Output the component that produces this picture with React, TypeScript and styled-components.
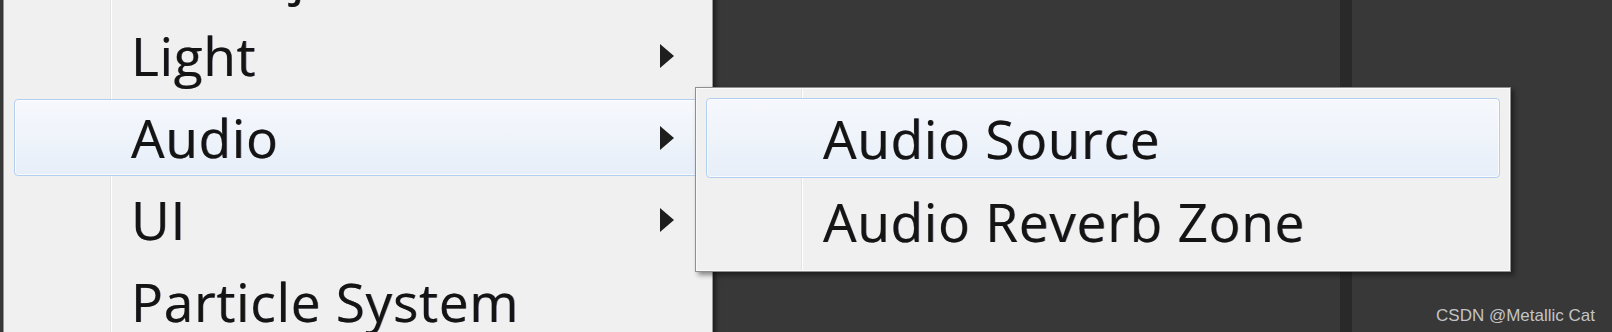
import React from "react";
import styled, { createGlobalStyle } from "styled-components";

const GlobalStyle = createGlobalStyle`
  html, body {
    margin: 0;
    padding: 0;
    width: 1612px;
    height: 332px;
    overflow: hidden;
  }
  body {
    background: linear-gradient(
      90deg,
      #383838 0 1340px,
      #292929 1340px 1352px,
      #383838 1352px
    );
    font-family: "Open Sans", "Noto Sans", sans-serif;
  }
`;

const Stage = styled.div`
  position: relative;
  display: flex;
  align-items: flex-start;
  height: 332px;
  padding-left: 3px;
  box-sizing: border-box;
  overflow: hidden;
`;

const Menu = styled.div<{ $gutter: number }>`
  position: relative;
  box-sizing: border-box;
  display: flex;
  flex-direction: column;
  flex: none;
  border: 1px solid #979797;
  background: linear-gradient(
    90deg,
    #f0f0f0 0 ${(p) => p.$gutter}px,
    #e2e3e3 ${(p) => p.$gutter}px ${(p) => p.$gutter + 1}px,
    #ffffff ${(p) => p.$gutter + 1}px ${(p) => p.$gutter + 2}px,
    #f0f0f0 ${(p) => p.$gutter + 2}px
  );
`;

const MainMenu = styled(Menu)`
  width: 710px;
  margin-top: -68px;
  padding: 3px 6px 3px 10px;
  gap: 5px;
  border-top: none;
  box-shadow: 3px 0 4px rgba(0, 0, 0, 0.45);
  z-index: 1;
`;

const SubMenu = styled(Menu)`
  width: 816px;
  margin-left: -18px;
  margin-top: 87px;
  padding: 10px;
  gap: 3px;
  border-color: #8f8f8f;
  box-shadow: 3px 3px 5px rgba(0, 0, 0, 0.45), inset 0 0 0 1px #fafafa;
  z-index: 2;
`;

const Item = styled.div<{ $active?: boolean; $h: number }>`
  box-sizing: border-box;
  display: flex;
  align-items: center;
  height: ${(p) => p.$h}px;
  padding-left: 116px;
  padding-right: 31px;
  border: 1px solid ${(p) => (p.$active ? "#b3cff0" : "transparent")};
  border-radius: 4px;
  background: ${(p) =>
    p.$active
      ? "linear-gradient(180deg, #f6f8fd 0%, #eef3fa 55%, #e6eef9 100%)"
      : "transparent"};
  box-shadow: ${(p) =>
    p.$active ? "inset 0 0 0 1px rgba(255,255,255,0.7)" : "none"};
`;

const Label = styled.span`
  flex: 1;
  font-family: "Open Sans", "Noto Sans", sans-serif;
  font-size: 53px;
  color: #141414;
  white-space: nowrap;
  letter-spacing: 0.8px;
  text-shadow: 0.6px 0 0 rgba(20, 20, 60, 0.55), -0.3px 0 0 rgba(60, 40, 0, 0.3);
`;

const Arrow = styled.svg`
  flex: none;
  width: 14px;
  height: 24px;
`;

const Watermark = styled.div`
  position: absolute;
  right: 17px;
  bottom: 6px;
  font-family: "Liberation Sans", Arial, sans-serif;
  font-size: 17px;
  color: #c4c4c4;
  z-index: 3;
`;

const SubArrow = () => (
  <Arrow viewBox="0 0 14 24">
    <polygon points="0,0 14,12 0,24" fill="#1e1e1e" />
  </Arrow>
);

const mainItems = [
  { label: "2D Object", sub: true },
  { label: "Light", sub: true },
  { label: "Audio", sub: true, active: true },
  { label: "UI", sub: true },
  { label: "Particle System", sub: false },
];

const subItems = [
  { label: "Audio Source", active: true },
  { label: "Audio Reverb Zone" },
];

export default function App() {
  return (
    <>
      <GlobalStyle />
      <Stage>
        <MainMenu $gutter={106}>
          {mainItems.map((it) => (
            <Item key={it.label} $h={77} $active={it.active}>
              <Label>{it.label}</Label>
              {it.sub && <SubArrow />}
            </Item>
          ))}
        </MainMenu>
        <SubMenu $gutter={105}>
          {subItems.map((it) => (
            <Item key={it.label} $h={80} $active={it.active}>
              <Label>{it.label}</Label>
            </Item>
          ))}
        </SubMenu>
        <Watermark>CSDN @Metallic Cat</Watermark>
      </Stage>
    </>
  );
}
